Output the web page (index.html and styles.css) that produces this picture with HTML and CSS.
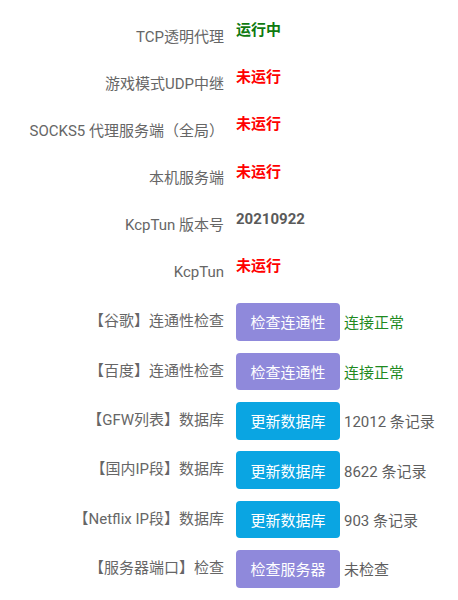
FILE: index.html
```html
<!DOCTYPE html>
<html lang="zh-CN">
<head>
<meta charset="utf-8">
<title>ShadowSocksR 状态</title>
<link rel="stylesheet" href="styles.css">
</head>
<body>
<div class="form">
  <div class="row text"><div class="label">TCP透明代理</div><div class="value"><b class="run">运行中</b></div></div>
  <div class="row text"><div class="label">游戏模式UDP中继</div><div class="value"><b class="stop">未运行</b></div></div>
  <div class="row text"><div class="label">SOCKS5 代理服务端（全局）</div><div class="value"><b class="stop">未运行</b></div></div>
  <div class="row text"><div class="label">本机服务端</div><div class="value"><b class="stop">未运行</b></div></div>
  <div class="row text"><div class="label">KcpTun 版本号</div><div class="value"><b class="ver">20210922</b></div></div>
  <div class="row text"><div class="label">KcpTun</div><div class="value"><b class="stop">未运行</b></div></div>

  <div class="row act"><div class="label">【谷歌】连通性检查</div><div class="value"><button class="btn purple">检查连通性</button><span class="status ok">连接正常</span></div></div>
  <div class="row act"><div class="label">【百度】连通性检查</div><div class="value"><button class="btn purple">检查连通性</button><span class="status ok">连接正常</span></div></div>
  <div class="row act"><div class="label">【GFW列表】数据库</div><div class="value"><button class="btn blue">更新数据库</button><span class="status">12012 条记录</span></div></div>
  <div class="row act"><div class="label">【国内IP段】数据库</div><div class="value"><button class="btn blue">更新数据库</button><span class="status">8622 条记录</span></div></div>
  <div class="row act"><div class="label">【Netflix IP段】数据库</div><div class="value"><button class="btn blue">更新数据库</button><span class="status">903 条记录</span></div></div>
  <div class="row act"><div class="label">【服务器端口】检查</div><div class="value"><button class="btn purple">检查服务器</button><span class="status">未检查</span></div></div>
</div>
</body>
</html>
```

FILE: styles.css
```css
html, body {
  margin: 0;
  padding: 0;
  background: #ffffff;
}

body {
  font-family: Roboto, "Noto Sans CJK SC", "Noto Sans", sans-serif;
  font-size: 15px;
  color: #666666;
}

.form {
  padding-top: 20px;
}

.row {
  display: flex;
  gap: 12px;
  align-items: flex-start;
}

.label {
  flex: none;
  width: 224px;
  text-align: right;
  white-space: nowrap;
}

.row.text {
  height: 47.2px;
  line-height: 20px;
}

.row.text .label {
  padding-top: 6.5px;
}

.row.act {
  height: 49.4px;
}

.row.act .label {
  line-height: 37.6px;
}

.row.act .value {
  display: flex;
  align-items: center;
  height: 37.6px;
}

.run {
  color: #0f7a0f;
  font-weight: 700;
}

.stop {
  color: #ff0000;
  font-weight: 700;
}

.ver {
  color: #5a5a5a;
  font-weight: 700;
}

.btn {
  flex: none;
  width: 104px;
  height: 37.6px;
  padding: 0;
  border: none;
  border-radius: 4px;
  color: #ffffff;
  font-family: Roboto, "Noto Sans CJK SC", "Noto Sans", sans-serif;
  font-size: 15px;
  cursor: pointer;
}

.btn.purple {
  background: #8f89db;
}

.btn.blue {
  background: #0aa5e2;
}

.status {
  margin-left: 4px;
  color: #5e5e5e;
  white-space: nowrap;
}

.status.ok {
  color: #1f8a1f;
}
```
